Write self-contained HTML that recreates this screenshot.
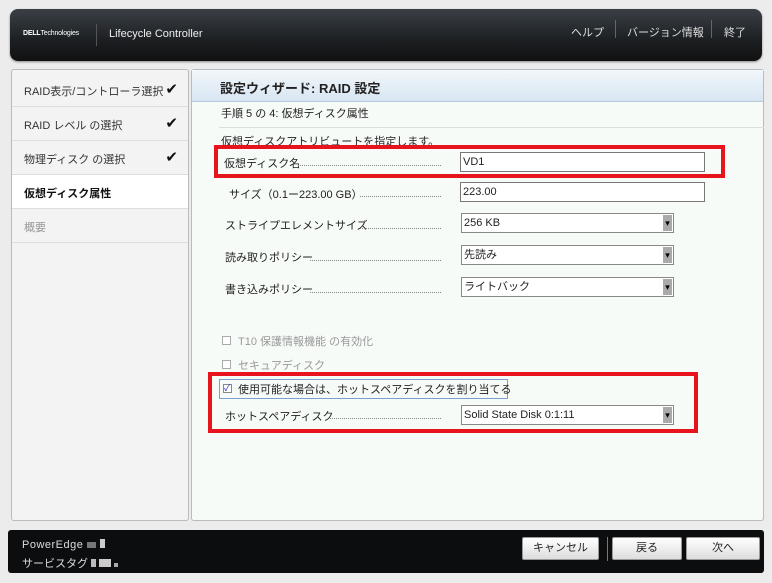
<!DOCTYPE html>
<html><head><meta charset="utf-8"><style>
*{box-sizing:border-box;margin:0;padding:0}
body{width:772px;height:583px;background:#ececec;font-family:"Liberation Sans","Noto Sans CJK JP",sans-serif;position:relative;overflow:hidden;font-size:11px;color:#222}
.abs{position:absolute}
.hdr{left:10px;top:9px;width:752px;height:52px;border-radius:8px;background:linear-gradient(#3b4047,#1c1f22 60%,#111);box-shadow:0 1px 2px #888}
.side{left:11px;top:69px;width:178px;height:452px;background:#f3f3f3;border:1px solid #bbb;border-radius:3px}
.item{position:absolute;left:0;width:176px;height:34px;border-bottom:1px solid #ddd;padding:10px 0 0 12px;font-size:11px;color:#333}
.chk{position:absolute;right:10px;top:7px;font-size:15px;color:#111}
.main{left:191px;top:69px;width:573px;height:452px;background:#f7fbf8;border:1px solid #bbb;border-radius:3px}
.title{left:192px;top:70px;width:571px;height:32px;background:linear-gradient(#f2f7fb,#d8e6f2);border-bottom:1px solid #b5c8dc;font-weight:bold;font-size:13px;padding:8px 0 0 28px;color:#222}
.lbl{font-size:11px;color:#222;white-space:nowrap}
.dots{position:absolute;border-bottom:1px dotted #888;height:1px}
.inp{background:#fff;border:1px solid #777;font-size:11px;padding:0 2px;height:20px;line-height:18px}
.sel{background:#fff;border:1px solid #888;font-size:11px;padding:0 2px;height:20px;line-height:18px;width:213px}
.sel:after{content:"▾";position:absolute;right:1px;top:1px;width:9px;height:16px;background:#aaa;color:#000;font-size:9px;text-align:center;line-height:16px}
.red{border:4px solid #e8141d}
.cb{width:9px;height:9px;border:1px solid #aaa;background:#fff}
.ftr{left:8px;top:530px;width:756px;height:43px;background:#0c0d0f;border-radius:3px}
.btn{top:537px;height:23px;background:linear-gradient(#fff,#ddd);border:1px solid #999;border-radius:2px;font-size:11px;text-align:center;line-height:21px;color:#222}
</style></head><body>
<div class="abs hdr"></div>
<div class="abs" style="left:23px;top:30px;color:#fff;font-size:7px;font-weight:bold;letter-spacing:-.2px">D&#8203;ELL<span style="font-weight:normal">Technologies</span></div>
<div class="abs" style="left:96px;top:24px;width:1px;height:22px;background:#555"></div>
<div class="abs" style="left:109px;top:28px;color:#eee;font-size:11px">Lifecycle Controller</div>
<div class="abs" style="left:571px;top:24px;color:#ddd;font-size:11px">ヘルプ</div>
<div class="abs" style="left:615px;top:20px;width:1px;height:18px;background:#666"></div>
<div class="abs" style="left:627px;top:24px;color:#ddd;font-size:11px">バージョン情報</div>
<div class="abs" style="left:711px;top:20px;width:1px;height:18px;background:#666"></div>
<div class="abs" style="left:724px;top:24px;color:#ddd;font-size:11px">終了</div>

<div class="abs side">
<div class="item" style="top:3px">RAID表示/コントローラ選択<span class="chk">✔</span></div>
<div class="item" style="top:37px">RAID レベル の選択<span class="chk">✔</span></div>
<div class="item" style="top:71px">物理ディスク の選択<span class="chk">✔</span></div>
<div class="item" style="top:105px;background:#fff;font-weight:bold;color:#111">仮想ディスク属性</div>
<div class="item" style="top:139px;color:#999">概要</div>
</div>

<div class="abs main"></div>
<div class="abs title">設定ウィザード: RAID 設定</div>
<div class="abs lbl" style="left:221px;top:105px">手順 5 の 4: 仮想ディスク属性</div>
<div class="abs" style="left:219px;top:127px;width:545px;height:1px;background:#ddd"></div>
<div class="abs lbl" style="left:221px;top:133px">仮想ディスクアトリビュートを指定します。</div>

<div class="abs red" style="left:214px;top:145px;width:511px;height:33px"></div>
<div class="abs lbl" style="left:224px;top:155px">仮想ディスク名</div><div class="dots" style="left:298px;top:165px;width:143px"></div>
<div class="abs inp" style="left:460px;top:152px;width:245px">VD1</div>

<div class="abs lbl" style="left:229px;top:186px">サイズ（0.1ー223.00 GB）</div><div class="dots" style="left:360px;top:196px;width:81px"></div>
<div class="abs inp" style="left:460px;top:182px;width:245px">223.00</div>

<div class="abs lbl" style="left:225px;top:217px">ストライプエレメントサイズ</div><div class="dots" style="left:360px;top:228px;width:81px"></div>
<div class="abs sel" style="left:461px;top:213px">256 KB</div>
<div class="abs lbl" style="left:225px;top:249px">読み取りポリシー</div><div class="dots" style="left:310px;top:260px;width:131px"></div>
<div class="abs sel" style="left:461px;top:245px">先読み</div>
<div class="abs lbl" style="left:225px;top:281px">書き込みポリシー</div><div class="dots" style="left:310px;top:292px;width:131px"></div>
<div class="abs sel" style="left:461px;top:277px">ライトバック</div>

<div class="abs cb" style="left:222px;top:336px"></div><div class="abs lbl" style="left:238px;top:333px;color:#999">T10 保護情報機能 の有効化</div>
<div class="abs cb" style="left:222px;top:360px"></div><div class="abs lbl" style="left:238px;top:357px;color:#999">セキュアディスク</div>

<div class="abs red" style="left:208px;top:372px;width:490px;height:61px"></div>
<div class="abs" style="left:219px;top:379px;width:289px;height:20px;border:1px solid #7d9fd0"></div>
<div class="abs cb" style="left:223px;top:384px;border-color:#888;color:#23c;font-size:9px;line-height:7px">✓</div>
<div class="abs lbl" style="left:238px;top:381px">使用可能な場合は、ホットスペアディスクを割り当てる</div>
<div class="abs lbl" style="left:225px;top:408px">ホットスペアディスク</div><div class="dots" style="left:330px;top:418px;width:111px"></div>
<div class="abs sel" style="left:461px;top:405px">Solid State Disk 0:1:11</div>

<div class="abs ftr"></div>
<div class="abs" style="left:22px;top:539px;color:#ddd;font-size:11px;letter-spacing:.5px">PowerEdge <span style="display:inline-block;width:9px;height:6px;background:#777"></span> <span style="display:inline-block;width:5px;height:9px;background:#ccc"></span></div>
<div class="abs" style="left:22px;top:555px;color:#ddd;font-size:11px">サービスタグ <span style="display:inline-block;width:5px;height:8px;background:#bbb"></span> <span style="display:inline-block;width:12px;height:8px;background:#ccc"></span> <span style="display:inline-block;width:4px;height:4px;background:#aaa"></span></div>
<div class="abs btn" style="left:522px;width:77px">キャンセル</div>
<div class="abs" style="left:607px;top:537px;width:1px;height:24px;background:#777"></div>
<div class="abs btn" style="left:612px;width:70px">戻る</div>
<div class="abs btn" style="left:686px;width:74px">次へ</div>
</body></html>
